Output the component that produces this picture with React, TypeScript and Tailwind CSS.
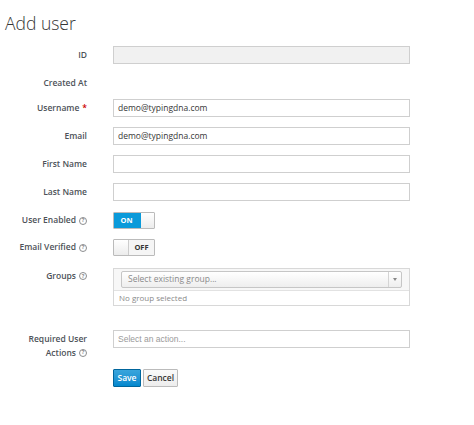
import React from "react";

const font = { fontFamily: '"Open Sans", "Liberation Sans", sans-serif' };

function Help() {
  return (
    <span className="ml-[3px] inline-flex h-[8px] w-[8px] items-center justify-center rounded-full border border-[#8b8d8f] text-[5.5px] font-bold leading-none text-[#8b8d8f]">
      ?
    </span>
  );
}

function Label({ children, help }: { children: React.ReactNode; help?: boolean }) {
  return (
    <div className="flex w-[87px] shrink-0 items-center justify-end text-[8.5px] font-semibold text-[#4d5258]">
      {children}
      {help && <Help />}
    </div>
  );
}

function TextInput({ value, disabled }: { value?: string; disabled?: boolean }) {
  return (
    <div
      className={`flex h-[18px] w-[297px] items-center border border-[#cfcfcf] px-[4px] text-[8.5px] text-[#363636] ${
        disabled ? "bg-[#f1f1f1]" : "bg-white"
      }`}
    >
      {value}
    </div>
  );
}

function Toggle({ on }: { on: boolean }) {
  return (
    <div className="flex h-[17px] w-[42px] overflow-hidden rounded-[1px] border border-[#bbbbbb] text-[7.5px] font-bold">
      {on ? (
        <>
          <div className="flex w-[27px] items-center justify-center bg-[#0a9ada] pr-[2px] text-white">ON</div>
          <div className="flex-1 bg-gradient-to-b from-white to-[#ececec]"></div>
        </>
      ) : (
        <>
          <div className="w-[15px] border-r border-[#cccccc] bg-gradient-to-b from-white to-[#ececec]"></div>
          <div className="flex flex-1 items-center justify-center bg-[#f5f5f5] text-[#363636]">OFF</div>
        </>
      )}
    </div>
  );
}

export default function App() {
  return (
    <div className="h-[425px] w-[474px] bg-white" style={font}>
      <h1 className="pl-[5px] pt-[10px] text-[17.5px] font-light leading-[26px] text-[#363636]">Add user</h1>

      <div className="flex flex-col">
        <div className="mt-[10px] flex h-[18px] gap-[26px]">
          <Label>ID</Label>
          <TextInput disabled />
        </div>

        <div className="mt-[10px] flex h-[18px] gap-[26px]">
          <Label>Created At</Label>
        </div>

        <div className="mt-[7px] flex h-[18px] gap-[26px]">
          <Label>
            Username <span className="ml-[3px] text-[#cc0000]">*</span>
          </Label>
          <TextInput value="demo@typingdna.com" />
        </div>

        <div className="mt-[10px] flex h-[18px] gap-[26px]">
          <Label>Email</Label>
          <TextInput value="demo@typingdna.com" />
        </div>

        <div className="mt-[10px] flex h-[18px] gap-[26px]">
          <Label>First Name</Label>
          <TextInput />
        </div>

        <div className="mt-[10px] flex h-[18px] gap-[26px]">
          <Label>Last Name</Label>
          <TextInput />
        </div>

        <div className="mt-[11px] flex h-[17px] gap-[26px]">
          <Label help>User Enabled</Label>
          <Toggle on />
        </div>

        <div className="mt-[10px] flex h-[17px] gap-[26px]">
          <Label help>Email Verified</Label>
          <Toggle on={false} />
        </div>

        <div className="mt-[12px] flex gap-[26px]">
          <div className="pt-[2px]">
            <Label help>Groups</Label>
          </div>
          <div className="flex w-[297px] flex-col border border-[#d8d8d8] bg-white">
            <div className="border-b border-[#e2e2e2] bg-[#f7f7f7] px-[7px] py-[2px]">
              <div className="flex h-[17px] items-center justify-between rounded-[2px] border border-[#c6c6c6] bg-gradient-to-b from-white to-[#eeeeee] pl-[6px] text-[8.5px] text-[#8a8a8a]">
                <span>Select existing group...</span>
                <div className="flex h-full w-[13px] items-center justify-center border-l border-[#d4d4d4]">
                  <span className="border-x-[2.5px] border-t-[3px] border-x-transparent border-t-[#888888]"></span>
                </div>
              </div>
            </div>
            <div className="flex h-[14px] items-center px-[5px] text-[8px] text-[#8a8a8a]">No group selected</div>
          </div>
        </div>

        <div className="mt-[24px] flex gap-[26px]">
          <div className="flex w-[87px] shrink-0 flex-col items-end pt-[2px] text-[8.5px] font-semibold leading-[14px] text-[#4d5258]">
            <span>Required User</span>
            <span className="flex items-center">
              Actions
              <Help />
            </span>
          </div>
          <div
            className="flex h-[18px] w-[297px] items-center border border-[#cfcfcf] bg-white px-[4px] text-[8.5px] text-[#9a9a9a]"
            style={{ fontFamily: '"Liberation Sans", Arial, sans-serif' }}
          >
            Select an action...
          </div>
        </div>

        <div className="mt-[9px] flex gap-[2px] pl-[113px]">
          <button className="h-[18px] w-[28px] rounded-[1px] border border-[#00659c] bg-gradient-to-b from-[#39a5dc] to-[#0088ce] text-[8.5px] font-semibold text-white">
            Save
          </button>
          <button className="h-[18px] w-[35px] rounded-[1px] border border-[#bbbbbb] bg-gradient-to-b from-[#fafafa] to-[#ededed] text-[8.5px] font-semibold text-[#363636]">
            Cancel
          </button>
        </div>
      </div>
    </div>
  );
}
